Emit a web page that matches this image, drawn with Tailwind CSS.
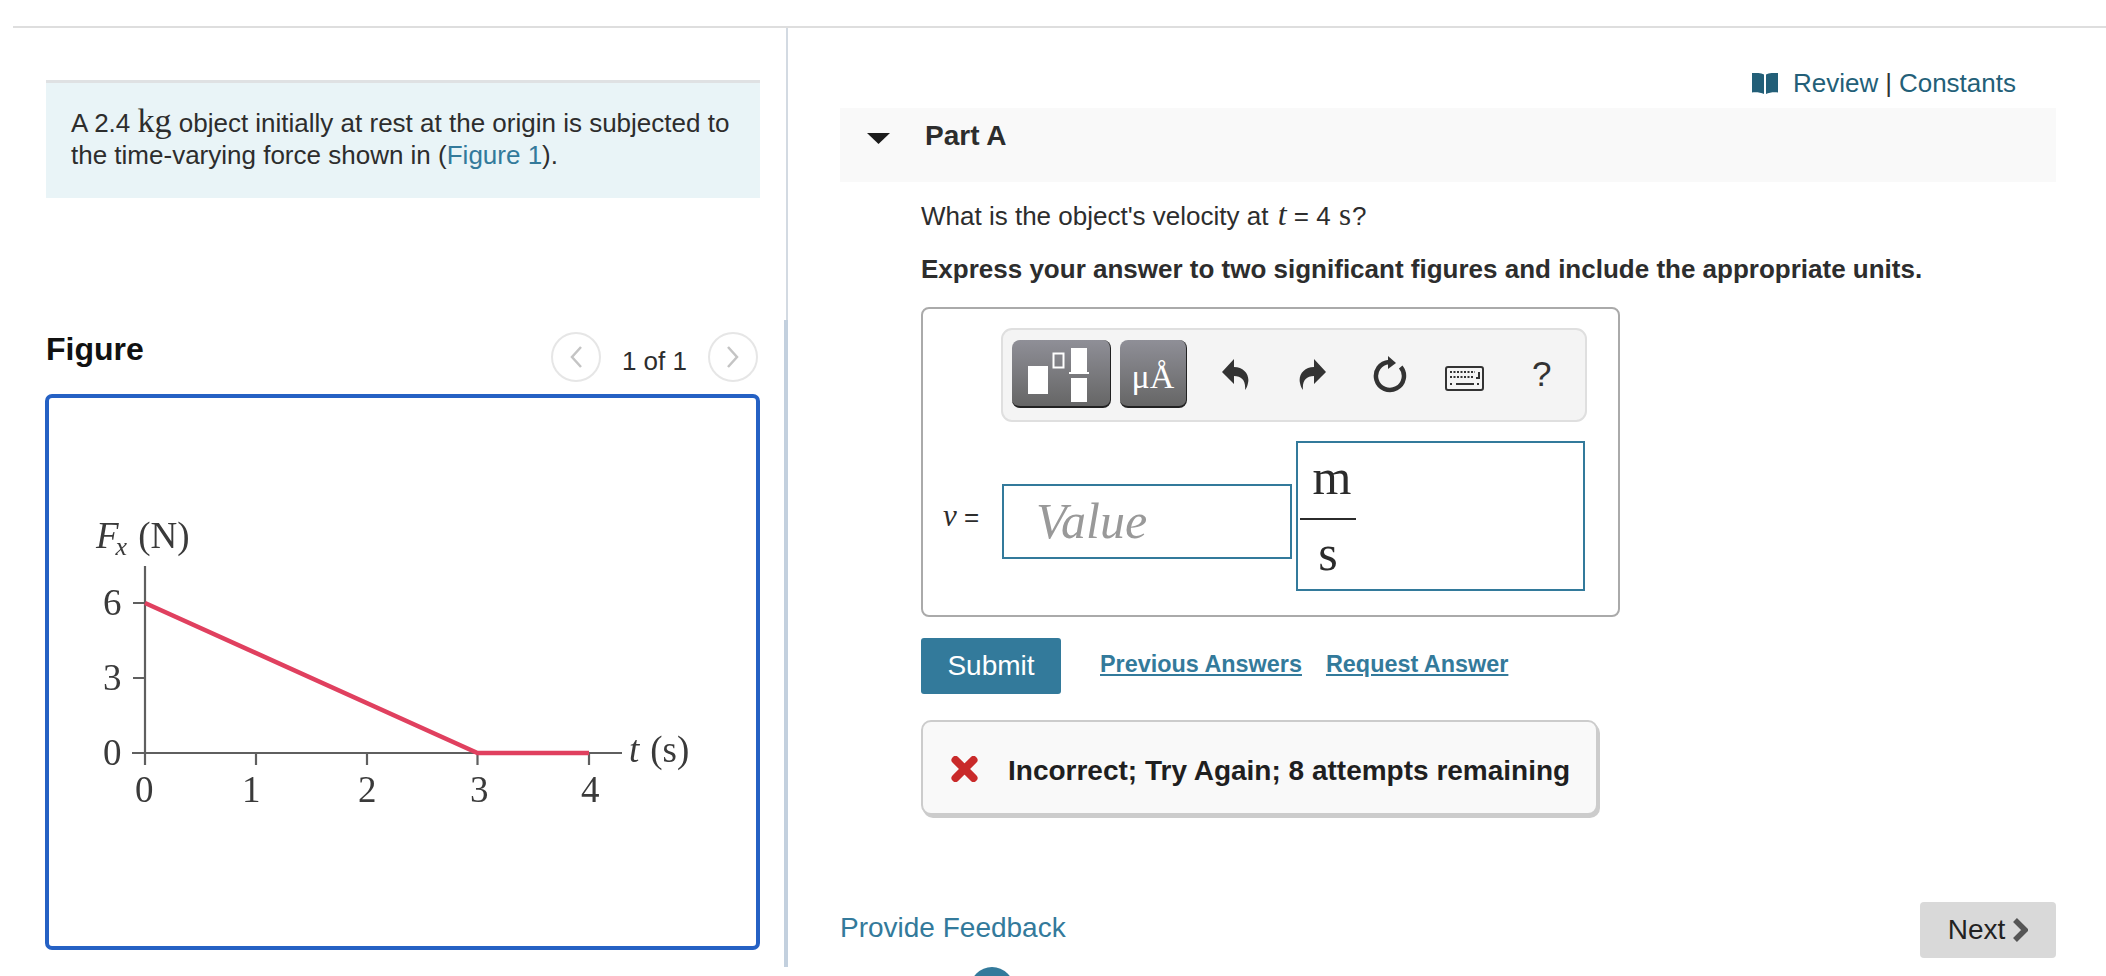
<!DOCTYPE html>
<html lang="en">
<head>
    <meta charset="UTF-8">
    <title>Part A</title>
    <script src="https://cdn.jsdelivr.net/npm/@tailwindcss/browser@4"></script>
</head>
<body class="bg-white h-[976px] overflow-hidden font-['Liberation_Sans',Arial,sans-serif] text-[26px] leading-[32px] text-[#2d2d2d]">
    <!-- Top rule -->
    <div class="pt-[26px] pl-[13px]"><div class="h-[2px] bg-[#dedede]"></div></div>

    <div class="flex h-[948px]">
        <!-- Left column -->
        <div class="w-[784px] shrink-0 pl-[45px] pt-[52px]">
            <div class="ml-[1px] w-[714px] h-[118px] bg-[#e9f4f7] border-t-[3px] border-[#dfe1e3] pl-[25px] pt-[24px]">
                <p>A 2.4 <span class="font-['Liberation_Serif',serif] text-[34px] leading-[0]">kg</span> object initially at rest at the origin is subjected to</p>
                <p>the time-varying force shown in (<a href="#" class="text-[#337a9b]">Figure 1</a>).</p>
            </div>

            <div class="flex justify-between items-start mt-[134px] w-[716px] h-[50px] pr-[3px]">
                <h2 class="ml-[1px] -mt-[1px] text-[32px] leading-[36px] font-bold text-[#111]">Figure</h2>
                <div class="flex items-center gap-[21px]">
                    <div class="w-[50px] h-[50px] rounded-full border-2 border-[#e6e6e6] flex items-center justify-center">
                        <svg width="14" height="24" viewBox="0 0 14 24" fill="none" stroke="#c4c4c4" stroke-width="2.5"><path d="M12 2 L3 12 L12 22"/></svg>
                    </div>
                    <span class="mt-[7px]">1 of 1</span>
                    <div class="w-[50px] h-[50px] rounded-full border-2 border-[#e6e6e6] flex items-center justify-center">
                        <svg width="14" height="24" viewBox="0 0 14 24" fill="none" stroke="#c4c4c4" stroke-width="2.5"><path d="M2 2 L11 12 L2 22"/></svg>
                    </div>
                </div>
            </div>

            <!-- Figure -->
            <div class="mt-[12px] w-[715px] h-[556px] border-4 border-[#2561c4] rounded-[7px] pl-[41px] pt-[102px]">
                <svg width="620" height="320" viewBox="90 500 620 320" class="font-['Liberation_Serif',serif] blur-[0.4px]">
                    <g stroke="#5f5f5f" stroke-width="2.200" fill="none">
                        <path d="M145 566 V765"/>
                        <path d="M132 753 H622"/>
                        <path d="M133 603 H145 M133 678 H145"/>
                        <path d="M256 753 V765 M367 753 V765 M477.500 753 V765 M589 753 V765"/>
                    </g>
                    <path d="M145 603 L477.500 753 H589" fill="none" stroke="#e0405f" stroke-width="4.500"/>
                    <g fill="#3a3a3a" font-size="37">
                        <text x="96" y="548"><tspan font-style="italic">F</tspan><tspan dy="7" dx="-3" font-size="26" font-style="italic">x</tspan><tspan dy="-7" dx="11">(N)</tspan></text>
                        <text x="103" y="615">6</text>
                        <text x="103" y="690">3</text>
                        <text x="103" y="765">0</text>
                        <text x="135" y="802">0</text>
                        <text x="242" y="802">1</text>
                        <text x="358" y="802">2</text>
                        <text x="470" y="802">3</text>
                        <text x="581" y="802">4</text>
                        <text x="629" y="762"><tspan font-style="italic">t</tspan><tspan dx="11">(s)</tspan></text>
                    </g>
                </svg>
            </div>
        </div>

        <!-- Divider -->
        <div class="w-[4px] shrink-0">
            <div class="ml-[2px] w-[2px] h-[292px] bg-[#d3dae2]"></div>
            <div class="w-[4px] h-[647px] bg-[#c3d0de]"></div>
        </div>

        <!-- Right column -->
        <div class="ml-[52px] w-[1216px] shrink-0">
            <div class="flex justify-end items-center pt-[39px] pr-[40px] text-[#235f78]">
                <svg width="26" height="21" viewBox="0 0 26 21" class="mr-[15px]" fill="#235f78">
                    <path d="M0 0 C4 -0.500 9 0 12 1.500 V21 C9 19.500 4 19 0 19.500 Z"/>
                    <path d="M26 0 C22 -0.500 17 0 14 1.500 V21 C17 19.500 22 19 26 19.500 Z"/>
                </svg>
                <a href="#">Review</a>
                <span class="text-[#333] mx-[7px]">|</span>
                <a href="#">Constants</a>
            </div>

            <div class="mt-[9px] h-[74px] bg-[#f9f9f9] flex items-center pl-[27px]">
                <svg width="23" height="11" viewBox="0 0 23 11" fill="#1c1c1c" class="-mt-[14px]"><path d="M0 0 H23 L11.500 11 Z"/></svg>
                <h3 class="ml-[35px] font-bold text-[28px] -mt-[18px]">Part A</h3>
            </div>

            <div class="pl-[81px]">
                <p class="mt-[18px]">What is the object's velocity at <span class="font-['Liberation_Serif',serif] italic text-[32px] leading-[0] ml-[2px]">t</span> = 4 <span class="font-['Liberation_Serif',serif] text-[31px] leading-[0] ml-[1px] mr-[1px]">s</span>?</p>
                <p class="mt-[21px] font-bold">Express your answer to two significant figures and include the appropriate units.</p>

                <!-- Answer box -->
                <div class="mt-[22px] w-[699px] h-[310px] border-2 border-[#aaaaaa] rounded-[8px]">
                    <div class="ml-[78px] mt-[19px] w-[586px] h-[94px] bg-[#f4f4f4] border-2 border-[#dfdfdf] rounded-[11px] flex items-center pl-[9px]">
                        <div class="-mt-[2px] w-[99px] h-[68px] rounded-[8px] bg-gradient-to-b from-[#8f8f97] to-[#666666] border-b-2 border-r border-[#222222] shrink-0">
                            <svg width="98" height="66" viewBox="0 0 98 66" fill="#fff">
                                <rect x="16" y="26" width="20" height="28"/>
                                <rect x="41.500" y="13.500" width="10" height="14" fill="none" stroke="#fff" stroke-width="2"/>
                                <rect x="59" y="8" width="16" height="24"/>
                                <rect x="57" y="32" width="20" height="2"/>
                                <rect x="59" y="38" width="16" height="24"/>
                            </svg>
                        </div>
                        <div class="-mt-[2px] ml-[9px] w-[67px] h-[68px] rounded-[8px] bg-gradient-to-b from-[#8f8f97] to-[#666666] border-b-2 border-r border-[#222222] shrink-0 text-white text-center font-['Liberation_Serif',serif] text-[34px] leading-[74px]">μÅ</div>
                        <svg width="27" height="31" viewBox="0 0 27 31" fill="#333" class="ml-[35px] -mt-[2px]"><path d="M0 13 L12 0 V8 C22 8 28 16 26 24 C25.500 27 24.500 29 23 31 C24 22 20 17 12 17 V25 Z"/></svg>
                        <svg width="27" height="31" viewBox="0 0 27 31" fill="#333" class="ml-[50px] -mt-[2px]"><path d="M27 13 L15 0 V8 C5 8 -1 16 1 24 C1.500 27 2.500 29 4 31 C3 22 7 17 15 17 V25 Z"/></svg>
                        <svg width="36" height="38" viewBox="0 0 36 38" fill="none" class="ml-[45px]"><path d="M29.700 11 A14 14 0 1 1 18 6" stroke="#333" stroke-width="4.500"/><path d="M17 0 L25 7 L17 13 Z" fill="#333"/></svg>
                        <svg width="39" height="25" viewBox="0 0 39 25" class="ml-[38px] mt-[7px]">
                            <rect x="1" y="1" width="37" height="23" rx="2" fill="#f4f4f4" stroke="#333" stroke-width="2"/>
                            <path d="M5 6 H30 M5 11 H28 M5 18 H8 M32 18 H35" stroke="#333" stroke-width="2" stroke-dasharray="2 1.500" fill="none"/>
                            <path d="M11 18 H29 M34 6 V12 H31" stroke="#333" stroke-width="2" fill="none"/>
                        </svg>
                        <span class="ml-[48px] -mt-[3px] text-[#333] text-[35px]">?</span>
                    </div>

                    <div class="flex items-start ml-[20px] mt-[19px]">
                        <div class="w-[59px] mt-[60px] text-[26px] leading-[32px]"><span class="font-['Liberation_Serif',serif] italic text-[31px] leading-[0]">v</span> =</div>
                        <div class="mt-[43px] w-[290px] h-[75px] border-2 border-[#337a9b] pl-[32px] font-['Liberation_Serif',serif] italic text-[50px] leading-[70px] text-[#999999]">Value</div>
                        <div class="ml-[4px] w-[289px] h-[150px] border-2 border-[#337a9b] pl-[2px] pt-[9px] font-['Liberation_Serif',serif] text-[50px] leading-[50px] text-[#2b2b2b]">
                            <div class="w-[56px] flex flex-col items-center">
                                <div class="ml-[8px]">m</div>
                                <div class="w-[56px] h-[2px] bg-[#2b2b2b] mt-[16px] mb-[8px]"></div>
                                <div>s</div>
                            </div>
                        </div>
                    </div>
                </div>

                <div class="mt-[21px] flex items-center">
                    <button class="w-[140px] h-[56px] bg-[#337a9b] rounded-[3px] text-white text-[28px]">Submit</button>
                    <a href="#" class="ml-[39px] -mt-[4px] font-bold text-[23.4px] underline text-[#337a9b]">Previous Answers</a>
                    <a href="#" class="ml-[24px] -mt-[4px] font-bold text-[23.4px] underline text-[#337a9b]">Request Answer</a>
                </div>

                <div class="mt-[26px] w-[677px] h-[95px] bg-[#f9f9f9] border-2 border-[#cccccc] rounded-[10px] shadow-[2px_3px_0_#cccccc] flex items-center pl-[28px]">
                    <svg width="27" height="26" viewBox="0 0 27 26" fill="none" stroke="#c92a2a" stroke-width="8" stroke-linecap="round" class="mt-[2px]"><path d="M4.500 4 L22.500 22 M22.500 4 L4.500 22"/></svg>
                    <span class="ml-[30px] font-bold text-[28px] mt-[7px] text-[#1f1f1f]">Incorrect; Try Again; 8 attempts remaining</span>
                </div>
            </div>

            <div class="flex justify-between items-start mt-[87px]">
                <a href="#" class="mt-[10px] text-[28px] text-[#337a9b]">Provide Feedback</a>
                <button class="w-[136px] h-[56px] bg-[#d9d9d9] rounded-[4px] text-[#222] text-[28px] flex items-center justify-center">
                    Next
                    <svg width="16" height="24" viewBox="0 0 16 24" fill="none" stroke="#555" stroke-width="5.500" class="ml-[7px]"><path d="M3 2 L13 12 L3 22"/></svg>
                </button>
            </div>

            <div class="ml-[130px] mt-[9px] w-[44px] h-[44px] rounded-full bg-[#337a9b]"></div>
        </div>
    </div>
</body>
</html>
